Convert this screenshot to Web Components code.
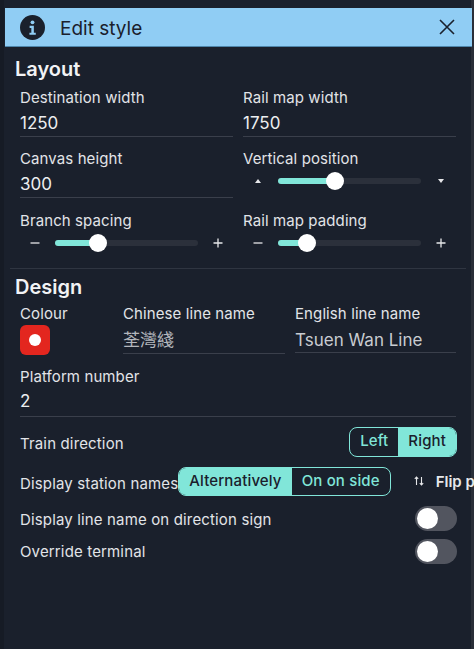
<!DOCTYPE html>
<html lang="en">
<head>
<meta charset="utf-8">
<title>Edit style</title>
<style>
  html, body { margin: 0; height: 100%; background: #1a202c; overflow: hidden; }
  body {
    font-family: Inter, "Noto Sans CJK TC", sans-serif; color: #e6e7ea;
    background: linear-gradient(to right, #161b25 4px, #1a202c 4px, #1a202c 471px, #2a2e38 471px);
  }
  edit-panel { height: 100%; }
  .grid-two { display: grid; grid-template-columns: 213px 213px; grid-template-rows: 49px 50px 44px; column-gap: 10px; row-gap: 12px; }
  .grid-three { display: grid; grid-template-columns: 93px 162px 161px; column-gap: 10px; align-items: start; }
  .split { justify-content: space-between; width: 437px; }
  hr { border: 0; border-top: 1px solid #2f3541; margin: 13px 6px 6px 5px; }
</style>
</head>
<body>
<edit-panel heading="Edit style">
  <panel-section heading="Layout" style="margin-top:10px;--heading-gap:7px">
    <div class="grid-two">
      <text-field label="Destination width" value="1250"></text-field>
      <text-field label="Rail map width" value="1750"></text-field>
      <text-field label="Canvas height" value="300"></text-field>
      <slider-field label="Vertical position" value="40" icons="arrows"></slider-field>
      <slider-field label="Branch spacing" value="30"></slider-field>
      <slider-field label="Rail map padding" value="20"></slider-field>
    </div>
  </panel-section>
  <hr>
  <panel-section heading="Design" style="--heading-gap:5px">
    <div class="grid-three">
      <colour-field label="Colour" colour="#e3261f"></colour-field>
      <text-field label="Chinese line name" value="荃灣綫" dim style="--value-height:30px;--value-line:33px;--value-colour:#b4b7bd"></text-field>
      <text-field label="English line name" value="Tsuen Wan Line" dim style="--value-line:33px"></text-field>
    </div>
    <text-field style="margin-top:12px;width:436px;--value-height:30px;--value-line:29px" label="Platform number" value="2"></text-field>
    <option-row class="split" label="Train direction" nudge="5" style="margin-top:10px">
      <toggle-group options="Left|Right" active="1"></toggle-group>
    </option-row>
    <option-row label="Display station names" nudge="5" style="margin-top:10px">
      <toggle-group options="Alternatively|On on side" active="0"></toggle-group>
      <flip-button label="Flip platform"></flip-button>
    </option-row>
    <option-row class="split" label="Display line name on direction sign" nudge="2" style="margin-top:10px">
      <switch-box></switch-box>
    </option-row>
    <option-row class="split" label="Override terminal" nudge="2" style="margin-top:7.5px">
      <switch-box></switch-box>
    </option-row>
  </panel-section>
</edit-panel>

<script>
class EditPanel extends HTMLElement {
  connectedCallback() {
    this.attachShadow({ mode: 'open' }).innerHTML = `
      <style>
        :host { display: block; box-sizing: border-box; padding: 8px 2px 0 5px; overflow: hidden; }
        .head {
          display: flex; align-items: center; height: 39px; padding: 0 17px 0 15px;
          background: #90cdf4; color: #1a202c; border-bottom: 1px solid #4e86ab; box-sizing: border-box;
        }
        .title { margin-left: 15px; padding-top: 2px; font-size: 19px; flex: 1; }
        svg { display: block; flex: none; }
      </style>
      <div class="head">
        <svg width="25" height="25" viewBox="0 0 26 26"><circle cx="13" cy="13" r="13" fill="#1a202c"/>
          <circle cx="13" cy="7.6" r="2" fill="#90cdf4"/>
          <path d="M10 11.2h4.4v7.2h2v2.2H9.8v-2.2h2v-5H10z" fill="#90cdf4"/></svg>
        <span class="title">${this.getAttribute('heading')}</span>
        <svg width="16" height="16" viewBox="0 0 16 16" stroke="#1a202c" stroke-width="1.6"><path d="M1 1l14 14M15 1L1 15"/></svg>
      </div>
      <slot></slot>`
  }
}

class PanelSection extends HTMLElement {
  connectedCallback() {
    this.attachShadow({ mode: 'open' }).innerHTML = `
      <style>
        :host { display: block; padding: 0 0 0 10px; }
        h2 { margin: 0 0 var(--heading-gap, 6px) 0; font-size: 20px; line-height: 24px; font-weight: 600; color: #f2f3f5; }
        .body { padding-left: 5px; }
      </style>
      <h2>${this.getAttribute('heading')}</h2>
      <div class="body"><slot></slot></div>`
  }
}

const labelCss = `
  .label { font-size: 15px; line-height: 20px; color: #e2e4e8; letter-spacing: 0.1px; white-space: nowrap; }
`

class TextField extends HTMLElement {
  connectedCallback() {
    const dim = this.hasAttribute('dim')
    this.attachShadow({ mode: 'open' }).innerHTML = `
      <style>
        :host { display: block; }
        ${labelCss}
        .value {
          height: var(--value-height, 29px); line-height: var(--value-line, 31px); font-size: 17px; box-sizing: border-box;
          border-bottom: 1px solid #3a3f4b; color: var(--value-colour, ${dim ? '#c9ccd1' : '#eceef0'});
        }
      </style>
      <div class="label">${this.getAttribute('label')}</div>
      <div class="value">${this.getAttribute('value')}</div>`
  }
}

class SliderField extends HTMLElement {
  connectedCallback() {
    const arrows = this.getAttribute('icons') === 'arrows'
    const lead = arrows
      ? '<path d="M-3 2L0 -2L3 2z" fill="#e6e7ea"/>'
      : '<path d="M-4.5 0H4.5" stroke="#e6e7ea" stroke-width="1.3"/>'
    const trail = arrows
      ? '<path d="M-3 -2L0 2L3 -2z" fill="#e6e7ea"/>'
      : '<path d="M-4.5 0H4.5M0 -4.5V4.5" stroke="#e6e7ea" stroke-width="1.3"/>'
    const icon = p => `<svg width="16" height="16" viewBox="-8 -8 16 16">${p}</svg>`
    const value = this.getAttribute('value')
    this.attachShadow({ mode: 'open' }).innerHTML = `
      <style>
        :host { display: block; }
        ${labelCss}
        .row { display: flex; align-items: center; justify-content: space-between; height: 24px; padding: 0 7px; }
        .row svg { display: block; flex: none; }
        .track { position: relative; width: 143px; height: 6px; border-radius: 3px; background: #2b303b; }
        .fill { height: 100%; width: ${value}%; border-radius: 3px; background: #81e6d9; }
        .thumb {
          position: absolute; top: 50%; left: ${value}%; width: 18px; height: 18px; border-radius: 50%;
          background: #fff; transform: translate(-50%, -50%);
        }
      </style>
      <div class="label">${this.getAttribute('label')}</div>
      <div class="row">
        ${icon(lead)}
        <div class="track"><div class="fill"></div><div class="thumb"></div></div>
        ${icon(trail)}
      </div>`
  }
}

class ColourField extends HTMLElement {
  connectedCallback() {
    this.attachShadow({ mode: 'open' }).innerHTML = `
      <style>
        :host { display: block; }
        ${labelCss}
        .swatch {
          display: flex; align-items: center; justify-content: center; margin-top: 1px;
          width: 30px; height: 30px; border-radius: 6px; background: ${this.getAttribute('colour')};
        }
        .dot { width: 12px; height: 12px; border-radius: 50%; background: #fff; }
      </style>
      <div class="label">${this.getAttribute('label')}</div>
      <div class="swatch"><div class="dot"></div></div>`
  }
}

class OptionRow extends HTMLElement {
  connectedCallback() {
    this.attachShadow({ mode: 'open' }).innerHTML = `
      <style>
        :host { display: flex; align-items: center; white-space: nowrap; }
        ${labelCss}
        .label { padding-top: ${this.getAttribute('nudge') || 0}px; letter-spacing: 0.15px; }
        ::slotted(*) { flex: none; }
      </style>
      <div class="label">${this.getAttribute('label')}</div>
      <slot></slot>`
  }
}

class ToggleGroup extends HTMLElement {
  connectedCallback() {
    const active = Number(this.getAttribute('active'))
    const buttons = this.getAttribute('options').split('|').map((o, i) =>
      `<span class="opt${i === active ? ' on' : ''}">${o}</span>`).join('')
    this.attachShadow({ mode: 'open' }).innerHTML = `
      <style>
        :host { display: inline-flex; box-sizing: border-box; border: 1px solid #81e6d9; border-radius: 8px; overflow: hidden; }
        .opt { padding: 0 10px; height: 27.5px; line-height: 26px; font-size: 15px; font-weight: 500; letter-spacing: 0.15px; color: #81e6d9; white-space: nowrap; }
        .on { background: #81e6d9; color: #1a202c; }
      </style>
      ${buttons}`
  }
}

class FlipButton extends HTMLElement {
  connectedCallback() {
    this.attachShadow({ mode: 'open' }).innerHTML = `
      <style>
        :host { display: inline-flex; align-items: center; margin-left: 22px; font-size: 15px; font-weight: 600; color: #e6e7ea; white-space: nowrap; }
        svg { display: block; margin-right: 11px; }
      </style>
      <svg width="12" height="12" viewBox="0 0 12 12" fill="none" stroke="#e6e7ea" stroke-width="1.1">
        <path d="M3.5 10V2M1.8 3.8L3.5 2l1.7 1.8M8.5 2v8M6.8 8.2L8.5 10l1.7-1.8"/>
      </svg>
      ${this.getAttribute('label')}`
  }
}

class SwitchBox extends HTMLElement {
  connectedCallback() {
    this.attachShadow({ mode: 'open' }).innerHTML = `
      <style>
        :host { display: block; box-sizing: border-box; width: 42px; height: 25px; padding: 2px; border-radius: 13px; background: #52555f; }
        .knob { width: 21px; height: 21px; border-radius: 50%; background: #fff; }
      </style>
      <div class="knob"></div>`
  }
}

customElements.define('edit-panel', EditPanel)
customElements.define('panel-section', PanelSection)
customElements.define('text-field', TextField)
customElements.define('slider-field', SliderField)
customElements.define('colour-field', ColourField)
customElements.define('option-row', OptionRow)
customElements.define('toggle-group', ToggleGroup)
customElements.define('flip-button', FlipButton)
customElements.define('switch-box', SwitchBox)
</script>
</body>
</html>
